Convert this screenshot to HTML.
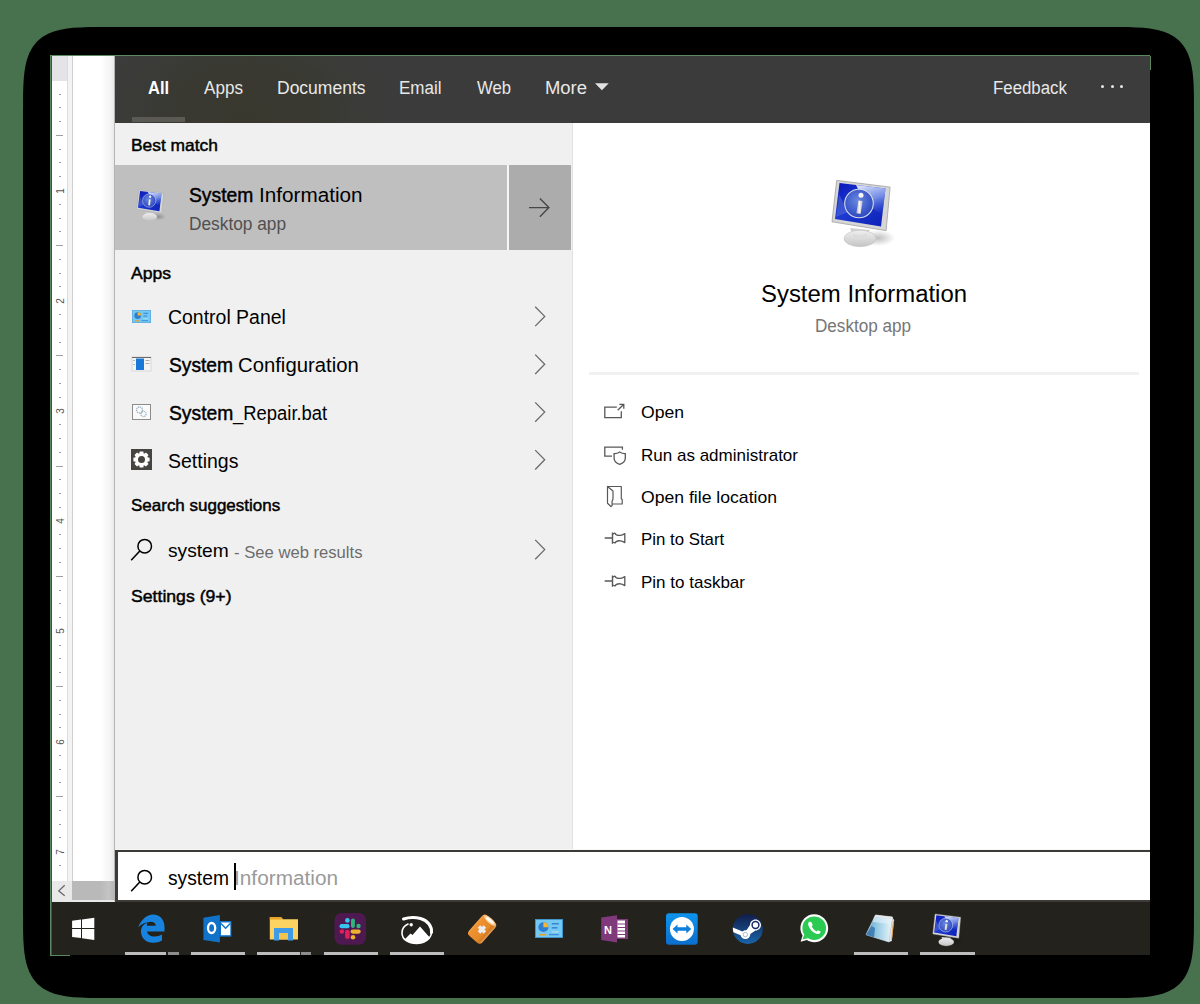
<!DOCTYPE html><html><head><meta charset="utf-8"><style>
html,body{margin:0;padding:0;}
body{width:1200px;height:1004px;position:relative;overflow:hidden;background:#48724e;font-family:"Liberation Sans", sans-serif;}
.a{position:absolute;}
.t{position:absolute;line-height:1;white-space:nowrap;transform-origin:0 0;}
svg{position:absolute;overflow:visible;}
</style></head><body>
<svg class="a" style="left:0;top:0" width="1200" height="1004" viewBox="0 0 1200 1004"><path d="M1104.00,27.00 L1127.02,27.10 L1136.52,27.39 L1143.75,27.87 L1149.79,28.55 L1155.03,29.42 L1159.68,30.49 L1163.85,31.77 L1167.64,33.25 L1171.08,34.93 L1174.22,36.84 L1177.08,38.96 L1179.68,41.32 L1182.04,43.92 L1184.16,46.78 L1186.07,49.92 L1187.75,53.36 L1189.23,57.15 L1190.51,61.32 L1191.58,65.97 L1192.45,71.21 L1193.13,77.25 L1193.61,84.48 L1193.90,93.98 L1194.00,117.00 L1194.00,908.00 L1193.90,931.02 L1193.61,940.52 L1193.13,947.75 L1192.45,953.79 L1191.58,959.03 L1190.51,963.68 L1189.23,967.85 L1187.75,971.64 L1186.07,975.08 L1184.16,978.22 L1182.04,981.08 L1179.68,983.68 L1177.08,986.04 L1174.22,988.16 L1171.08,990.07 L1167.64,991.75 L1163.85,993.23 L1159.68,994.51 L1155.03,995.58 L1149.79,996.45 L1143.75,997.13 L1136.52,997.61 L1127.02,997.90 L1104.00,998.00 L113.00,998.00 L89.98,997.90 L80.48,997.61 L73.25,997.13 L67.21,996.45 L61.97,995.58 L57.32,994.51 L53.15,993.23 L49.36,991.75 L45.92,990.07 L42.78,988.16 L39.92,986.04 L37.32,983.68 L34.96,981.08 L32.84,978.22 L30.93,975.08 L29.25,971.64 L27.77,967.85 L26.49,963.68 L25.42,959.03 L24.55,953.79 L23.87,947.75 L23.39,940.52 L23.10,931.02 L23.00,908.00 L23.00,117.00 L23.10,93.98 L23.39,84.48 L23.87,77.25 L24.55,71.21 L25.42,65.97 L26.49,61.32 L27.77,57.15 L29.25,53.36 L30.93,49.92 L32.84,46.78 L34.96,43.92 L37.32,41.32 L39.92,38.96 L42.78,36.84 L45.92,34.93 L49.36,33.25 L53.15,31.77 L57.32,30.49 L61.97,29.42 L67.21,28.55 L73.25,27.87 L80.48,27.39 L89.98,27.10 L113.00,27.00 Z" fill="#000"/></svg>
<div class="a" style="left:50px;top:55px;width:1100px;height:1px;background:#5a895f"></div>
<div class="a" style="left:50px;top:55px;width:1px;height:901px;background:#5a895f"></div>
<div class="a" style="left:1150px;top:56px;width:1px;height:14px;background:#5a895f"></div>
<div class="a" style="left:51px;top:955px;width:19px;height:1px;background:#5a895f"></div>
<div class="a" style="left:51px;top:56px;width:1px;height:899px;background:#4b4b4b"></div>
<div class="a" style="left:52px;top:56px;width:63px;height:845px;background:#fff"></div>
<div class="a" style="left:52px;top:56px;width:15px;height:25px;background:#e4e4e8"></div>
<div class="a" style="left:67px;top:56px;width:6px;height:825px;background:#f3f3f3;border-left:1px solid #dcdcdc;border-right:1px solid #d0d0d0;box-sizing:border-box"></div>
<div class="a" style="left:100px;top:56px;width:15px;height:825px;background:linear-gradient(90deg,#fff,#f4f4f4 70%,#e6e6e6)"></div>
<div class="a" style="left:59px;top:93.6px;width:2px;height:1px;background:#9a9a9a"></div>
<div class="a" style="left:59px;top:107.3px;width:2px;height:1px;background:#9a9a9a"></div>
<div class="a" style="left:59px;top:121.1px;width:2px;height:1px;background:#9a9a9a"></div>
<div class="a" style="left:56px;top:134.9px;width:7px;height:1px;background:#a0a0a0"></div>
<div class="a" style="left:59px;top:148.7px;width:2px;height:1px;background:#9a9a9a"></div>
<div class="a" style="left:59px;top:162.4px;width:2px;height:1px;background:#9a9a9a"></div>
<div class="a" style="left:59px;top:176.2px;width:2px;height:1px;background:#9a9a9a"></div>
<div class="a" style="left:59px;top:203.8px;width:2px;height:1px;background:#9a9a9a"></div>
<div class="a" style="left:59px;top:217.6px;width:2px;height:1px;background:#9a9a9a"></div>
<div class="a" style="left:59px;top:231.3px;width:2px;height:1px;background:#9a9a9a"></div>
<div class="a" style="left:56px;top:245.1px;width:7px;height:1px;background:#a0a0a0"></div>
<div class="a" style="left:59px;top:258.9px;width:2px;height:1px;background:#9a9a9a"></div>
<div class="a" style="left:59px;top:272.6px;width:2px;height:1px;background:#9a9a9a"></div>
<div class="a" style="left:59px;top:286.4px;width:2px;height:1px;background:#9a9a9a"></div>
<div class="a" style="left:59px;top:314.0px;width:2px;height:1px;background:#9a9a9a"></div>
<div class="a" style="left:59px;top:327.8px;width:2px;height:1px;background:#9a9a9a"></div>
<div class="a" style="left:59px;top:341.5px;width:2px;height:1px;background:#9a9a9a"></div>
<div class="a" style="left:56px;top:355.3px;width:7px;height:1px;background:#a0a0a0"></div>
<div class="a" style="left:59px;top:369.1px;width:2px;height:1px;background:#9a9a9a"></div>
<div class="a" style="left:59px;top:382.9px;width:2px;height:1px;background:#9a9a9a"></div>
<div class="a" style="left:59px;top:396.6px;width:2px;height:1px;background:#9a9a9a"></div>
<div class="a" style="left:59px;top:424.2px;width:2px;height:1px;background:#9a9a9a"></div>
<div class="a" style="left:59px;top:438.0px;width:2px;height:1px;background:#9a9a9a"></div>
<div class="a" style="left:59px;top:451.7px;width:2px;height:1px;background:#9a9a9a"></div>
<div class="a" style="left:56px;top:465.5px;width:7px;height:1px;background:#a0a0a0"></div>
<div class="a" style="left:59px;top:479.3px;width:2px;height:1px;background:#9a9a9a"></div>
<div class="a" style="left:59px;top:493.1px;width:2px;height:1px;background:#9a9a9a"></div>
<div class="a" style="left:59px;top:506.8px;width:2px;height:1px;background:#9a9a9a"></div>
<div class="a" style="left:59px;top:534.4px;width:2px;height:1px;background:#9a9a9a"></div>
<div class="a" style="left:59px;top:548.2px;width:2px;height:1px;background:#9a9a9a"></div>
<div class="a" style="left:59px;top:561.9px;width:2px;height:1px;background:#9a9a9a"></div>
<div class="a" style="left:56px;top:575.7px;width:7px;height:1px;background:#a0a0a0"></div>
<div class="a" style="left:59px;top:589.5px;width:2px;height:1px;background:#9a9a9a"></div>
<div class="a" style="left:59px;top:603.2px;width:2px;height:1px;background:#9a9a9a"></div>
<div class="a" style="left:59px;top:617.0px;width:2px;height:1px;background:#9a9a9a"></div>
<div class="a" style="left:59px;top:644.6px;width:2px;height:1px;background:#9a9a9a"></div>
<div class="a" style="left:59px;top:658.4px;width:2px;height:1px;background:#9a9a9a"></div>
<div class="a" style="left:59px;top:672.1px;width:2px;height:1px;background:#9a9a9a"></div>
<div class="a" style="left:56px;top:685.9px;width:7px;height:1px;background:#a0a0a0"></div>
<div class="a" style="left:59px;top:699.7px;width:2px;height:1px;background:#9a9a9a"></div>
<div class="a" style="left:59px;top:713.5px;width:2px;height:1px;background:#9a9a9a"></div>
<div class="a" style="left:59px;top:727.2px;width:2px;height:1px;background:#9a9a9a"></div>
<div class="a" style="left:59px;top:754.8px;width:2px;height:1px;background:#9a9a9a"></div>
<div class="a" style="left:59px;top:768.6px;width:2px;height:1px;background:#9a9a9a"></div>
<div class="a" style="left:59px;top:782.3px;width:2px;height:1px;background:#9a9a9a"></div>
<div class="a" style="left:56px;top:796.1px;width:7px;height:1px;background:#a0a0a0"></div>
<div class="a" style="left:59px;top:809.9px;width:2px;height:1px;background:#9a9a9a"></div>
<div class="a" style="left:59px;top:823.6px;width:2px;height:1px;background:#9a9a9a"></div>
<div class="a" style="left:59px;top:837.4px;width:2px;height:1px;background:#9a9a9a"></div>
<div class="a" style="left:59px;top:865.0px;width:2px;height:1px;background:#9a9a9a"></div>
<div class="t" style="left:55px;top:185.5px;width:12px;height:10px;font-size:10px;color:#555;text-align:center;transform:rotate(-90deg);transform-origin:50% 50%">1</div>
<div class="t" style="left:55px;top:295.7px;width:12px;height:10px;font-size:10px;color:#555;text-align:center;transform:rotate(-90deg);transform-origin:50% 50%">2</div>
<div class="t" style="left:55px;top:405.9px;width:12px;height:10px;font-size:10px;color:#555;text-align:center;transform:rotate(-90deg);transform-origin:50% 50%">3</div>
<div class="t" style="left:55px;top:516.1px;width:12px;height:10px;font-size:10px;color:#555;text-align:center;transform:rotate(-90deg);transform-origin:50% 50%">4</div>
<div class="t" style="left:55px;top:626.3px;width:12px;height:10px;font-size:10px;color:#555;text-align:center;transform:rotate(-90deg);transform-origin:50% 50%">5</div>
<div class="t" style="left:55px;top:736.5px;width:12px;height:10px;font-size:10px;color:#555;text-align:center;transform:rotate(-90deg);transform-origin:50% 50%">6</div>
<div class="t" style="left:55px;top:846.7px;width:12px;height:10px;font-size:10px;color:#555;text-align:center;transform:rotate(-90deg);transform-origin:50% 50%">7</div>
<div class="a" style="left:52px;top:881px;width:20px;height:19px;background:#e9e9e9"></div>
<div class="a" style="left:72px;top:881px;width:43px;height:19px;background:linear-gradient(90deg,#b9b9b9,#b9b9b9 65%,#c4c4c4 85%,#b4b4b4)"></div>
<div class="a" style="left:52px;top:900px;width:63px;height:2px;background:#e8e8e8"></div>
<svg style="left:58px;top:884px" width="10" height="14" viewBox="0 0 10 14"><path d="M6.7,1.3 L0.8,6.9 L6.7,11.7" fill="none" stroke="#666" stroke-width="1.3"/></svg>
<div class="a" style="left:115px;top:56px;width:1035px;height:67px;background:radial-gradient(ellipse 150px 110px at 130px 60px,#38382e 0%,rgba(56,56,46,0.7) 45%,rgba(60,60,60,0) 100%),linear-gradient(90deg,#3c3c3c,#3b3b3b 50%,#3c3c3c)"></div>
<div class="a" style="left:132px;top:117px;width:53px;height:5px;background:#5a5954"></div>
<div class="a" style="left:114px;top:56px;width:1px;height:845px;background:#b4b4b4"></div>
<div class="a" style="left:115px;top:123px;width:457px;height:726px;background:#f0f0f0"></div>
<div class="a" style="left:572px;top:123px;width:1px;height:726px;background:#e2e2e2"></div>
<div class="a" style="left:573px;top:123px;width:577px;height:726px;background:#fff"></div>
<div class="a" style="left:115px;top:165px;width:392px;height:85px;background:#bfbfbf"></div>
<div class="a" style="left:507px;top:165px;width:2px;height:85px;background:#f7f7f7"></div>
<div class="a" style="left:509px;top:165px;width:62px;height:85px;background:#acacac"></div>
<div class="a" style="left:589px;top:372px;width:550px;height:3px;background:#f1f1f1"></div>
<div class="a" style="left:115px;top:849px;width:1035px;height:1px;background:#f7f7f7"></div>
<div class="a" style="left:115px;top:850px;width:1035px;height:52px;background:#3c3b38"></div>
<div class="a" style="left:118px;top:852px;width:1032px;height:48px;background:#fff"></div>
<div class="a" style="left:52px;top:902px;width:1098px;height:53px;background:#23221c"></div>
<div class="t" style="left:148.30px;top:78.66px;font-size:18px;color:#fff;font-weight:700;transform:scaleX(0.9147);">All</div>
<div class="t" style="left:203.50px;top:78.66px;font-size:18px;color:#e8e8e8;font-weight:400;transform:scaleX(0.9505);">Apps</div>
<div class="t" style="left:276.50px;top:78.66px;font-size:18px;color:#e8e8e8;font-weight:400;transform:scaleX(0.9723);">Documents</div>
<div class="t" style="left:398.50px;top:78.66px;font-size:18px;color:#e8e8e8;font-weight:400;transform:scaleX(0.9463);">Email</div>
<div class="t" style="left:477.00px;top:78.66px;font-size:18px;color:#e8e8e8;font-weight:400;transform:scaleX(0.9267);">Web</div>
<div class="t" style="left:545.00px;top:78.66px;font-size:18px;color:#e8e8e8;font-weight:400;transform:scaleX(1.0246);">More</div>
<div class="t" style="left:993.00px;top:78.66px;font-size:18px;color:#e8e8e8;font-weight:400;transform:scaleX(0.9350);">Feedback</div>
<div class="t" style="left:131.00px;top:136.78px;font-size:16.5px;color:#000;font-weight:400;transform:scaleX(1.0533);-webkit-text-stroke:0.45px currentColor;">Best match</div>
<div class="t" style="left:189.00px;top:185.07px;font-size:20px;color:#000;font-weight:400;transform:scaleX(0.9638);-webkit-text-stroke:0.45px currentColor;">System</div>
<div class="t" style="left:258.90px;top:185.07px;font-size:20px;color:#000;font-weight:400;transform:scaleX(1.0349);">Information</div>
<div class="t" style="left:189.00px;top:215.99px;font-size:17.5px;color:#505050;font-weight:400;transform:scaleX(0.9883);">Desktop app</div>
<div class="t" style="left:131.00px;top:264.78px;font-size:16.5px;color:#000;font-weight:400;transform:scaleX(1.0647);-webkit-text-stroke:0.45px currentColor;">Apps</div>
<div class="t" style="left:167.75px;top:307.27px;font-size:20px;color:#000;font-weight:400;transform:scaleX(0.9728);">Control Panel</div>
<div class="t" style="left:168.75px;top:355.27px;font-size:20px;color:#000;font-weight:400;transform:scaleX(0.9597);-webkit-text-stroke:0.45px currentColor;">System</div>
<div class="t" style="left:237.70px;top:355.27px;font-size:20px;color:#000;font-weight:400;transform:scaleX(1.0148);">Configuration</div>
<div class="t" style="left:168.75px;top:403.07px;font-size:20px;color:#000;font-weight:400;transform:scaleX(0.9638);-webkit-text-stroke:0.45px currentColor;">System</div>
<div class="t" style="left:233.35px;top:403.07px;font-size:20px;color:#000;font-weight:400;transform:scaleX(0.9211);">_Repair.bat</div>
<div class="t" style="left:167.75px;top:450.57px;font-size:20px;color:#000;font-weight:400;transform:scaleX(0.9745);">Settings</div>
<div class="t" style="left:131.00px;top:497.28px;font-size:16.5px;color:#000;font-weight:400;transform:scaleX(1.0294);-webkit-text-stroke:0.45px currentColor;">Search suggestions</div>
<div class="t" style="left:167.75px;top:541.42px;font-size:19px;color:#000;font-weight:400;transform:scaleX(1.0100);">system</div>
<div class="t" style="left:234.00px;top:543.53px;font-size:16.5px;color:#6d6d6d;font-weight:400;transform:scaleX(1.0081);">- See web results</div>
<div class="t" style="left:131.00px;top:587.78px;font-size:16.5px;color:#000;font-weight:400;transform:scaleX(1.0693);-webkit-text-stroke:0.45px currentColor;">Settings (9+)</div>
<div class="t" style="left:760.80px;top:283.11px;font-size:23.5px;color:#000;font-weight:400;transform:scaleX(1.0177);">System Information</div>
<div class="t" style="left:815.30px;top:317.69px;font-size:17.5px;color:#767676;font-weight:400;transform:scaleX(0.9773);">Desktop app</div>
<div class="t" style="left:641.00px;top:404.21px;font-size:17px;color:#000;font-weight:400;transform:scaleX(1.0356);">Open</div>
<div class="t" style="left:641.00px;top:446.51px;font-size:17px;color:#000;font-weight:400;transform:scaleX(1.0010);">Run as administrator</div>
<div class="t" style="left:641.00px;top:489.01px;font-size:17px;color:#000;font-weight:400;transform:scaleX(1.0354);">Open file location</div>
<div class="t" style="left:641.00px;top:531.31px;font-size:17px;color:#000;font-weight:400;transform:scaleX(0.9893);">Pin to Start</div>
<div class="t" style="left:641.00px;top:573.81px;font-size:17px;color:#000;font-weight:400;transform:scaleX(1.0005);">Pin to taskbar</div>
<div class="t" style="left:168.30px;top:868.07px;font-size:20px;color:#000;font-weight:400;transform:scaleX(0.9618);">system</div>
<div class="t" style="left:234.00px;top:868.07px;font-size:20px;color:#9a9a9a;font-weight:400;transform:scaleX(1.0403);">Information</div>
<div class="a" id="cursor" style="left:234px;top:863px;width:2px;height:27px;background:#000"></div>
<svg style="left:590px;top:78px" width="25" height="20" viewBox="0 0 25 20"><path d="M5,5.3 L18.75,5.3 L11.9,12.2 Z" fill="#e2e2e2"/></svg>
<div class="a" style="left:1101.1px;top:85.2px;width:3.2px;height:3.2px;border-radius:50%;background:#e8e8e8"></div>
<div class="a" style="left:1110.6px;top:85.2px;width:3.2px;height:3.2px;border-radius:50%;background:#e8e8e8"></div>
<div class="a" style="left:1120.1px;top:85.2px;width:3.2px;height:3.2px;border-radius:50%;background:#e8e8e8"></div>
<svg style="left:520px;top:190px" width="40" height="35" viewBox="0 0 40 35"><path d="M9,17.6 L28.9,17.6 M19.9,8.4 L28.9,17.6 L19.9,26.8" fill="none" stroke="#474747" stroke-width="1.4"/></svg>
<svg style="left:525px;top:300px" width="30" height="32" viewBox="0 0 30 32"><path d="M10.2,6.70 L19.7,16.40 L10.2,26.10" fill="none" stroke="#6b6b6b" stroke-width="1.3"/></svg>
<svg style="left:525px;top:348px" width="30" height="32" viewBox="0 0 30 32"><path d="M10.2,6.60 L19.7,16.30 L10.2,26.00" fill="none" stroke="#6b6b6b" stroke-width="1.3"/></svg>
<svg style="left:525px;top:396px" width="30" height="32" viewBox="0 0 30 32"><path d="M10.2,6.40 L19.7,16.10 L10.2,25.80" fill="none" stroke="#6b6b6b" stroke-width="1.3"/></svg>
<svg style="left:525px;top:443px" width="30" height="32" viewBox="0 0 30 32"><path d="M10.2,7.10 L19.7,16.80 L10.2,26.50" fill="none" stroke="#6b6b6b" stroke-width="1.3"/></svg>
<svg style="left:525px;top:533px" width="30" height="32" viewBox="0 0 30 32"><path d="M10.2,6.90 L19.7,16.60 L10.2,26.30" fill="none" stroke="#6b6b6b" stroke-width="1.3"/></svg>
<svg style="left:125px;top:535px" width="35" height="30" viewBox="0 0 35 30"><circle cx="19.7" cy="11.2" r="6.8" fill="none" stroke="#000" stroke-width="1.5"/><path d="M6.6,24.7 L14.6,16.3" stroke="#000" stroke-width="1.6" stroke-linecap="round"/></svg>
<svg style="left:125px;top:865.5px" width="35" height="30" viewBox="0 0 35 30"><circle cx="19.7" cy="11.2" r="6.8" fill="none" stroke="#000" stroke-width="1.5"/><path d="M6.6,24.7 L14.6,16.3" stroke="#000" stroke-width="1.6" stroke-linecap="round"/></svg>
<svg style="left:598px;top:398px" width="34" height="34" viewBox="0 0 34 34"><path d="M18.8,9.2 L6.8,9.2 L6.8,19.7 L23.3,19.7 L23.3,13.3 M19.7,12.2 L25.8,6.3 M21.3,6.3 L25.8,6.3 L25.8,10.8" fill="none" stroke="#585858" stroke-width="1.3"/></svg>
<svg style="left:598px;top:440px" width="34" height="30" viewBox="0 0 34 30"><path d="M14,16.2 L6.8,16.2 L6.8,7.1 L24.4,7.1 L24.4,9.7" fill="none" stroke="#585858" stroke-width="1.3"/><path d="M21.7,12 C19.8,13.3 18,13.7 16.1,13.6 L16.1,18.3 C16.1,21.2 18.3,23.3 21.7,24.4 C25.1,23.3 27.3,21.2 27.3,18.3 L27.3,13.6 C25.4,13.7 23.6,13.3 21.7,12 Z" fill="none" stroke="#585858" stroke-width="1.3"/></svg>
<svg style="left:598px;top:482px" width="34" height="30" viewBox="0 0 34 30"><path d="M9.5,4.5 L23.3,4.5 L23.3,16.8 L24.2,17.5 L24.2,22 L14,22 M9.5,4.5 L9.5,21.2 L13,24.5 L14.2,23.3 L14,19.5 L15,17 L15,9 Z" fill="none" stroke="#585858" stroke-width="1.2" stroke-linejoin="round"/></svg>
<svg style="left:598px;top:528.3px" width="34" height="20" viewBox="0 0 34 20"><path d="M6.7,10 L14.5,10 M14.5,4.5 L14.5,15.7" fill="none" stroke="#585858" stroke-width="1.4"/><path d="M14.5,6.2 L17,5.2 C18,7.4 20.5,7.6 22.5,7.4 C24,7.2 25.5,6.4 26.8,5.6 L26.8,14.6 C25.5,13.8 24,13 22.5,12.8 C20.5,12.6 18,12.8 17,15 L14.5,14" fill="none" stroke="#585858" stroke-width="1.3" stroke-linejoin="round"/></svg>
<svg style="left:598px;top:570.7px" width="34" height="20" viewBox="0 0 34 20"><path d="M6.7,10 L14.5,10 M14.5,4.5 L14.5,15.7" fill="none" stroke="#585858" stroke-width="1.4"/><path d="M14.5,6.2 L17,5.2 C18,7.4 20.5,7.6 22.5,7.4 C24,7.2 25.5,6.4 26.8,5.6 L26.8,14.6 C25.5,13.8 24,13 22.5,12.8 C20.5,12.6 18,12.8 17,15 L14.5,14" fill="none" stroke="#585858" stroke-width="1.3" stroke-linejoin="round"/></svg>
<svg style="left:820.00px;top:170.00px" width="80.00" height="80.00" viewBox="0 0 80 80"><defs>
<linearGradient id="sascr" x1="0" y1="0" x2="1" y2="1"><stop offset="0" stop-color="#0a16b8"/><stop offset="0.45" stop-color="#1d3ad0"/><stop offset="1" stop-color="#0c1fb5"/></linearGradient>
<linearGradient id="sahl" x1="0.3" y1="0" x2="0.6" y2="1"><stop offset="0" stop-color="#dfe8ff" stop-opacity="0.95"/><stop offset="0.5" stop-color="#9db4f0" stop-opacity="0.7"/><stop offset="1" stop-color="#5b7de0" stop-opacity="0.1"/></linearGradient>
<linearGradient id="sastem" x1="0" y1="0" x2="1" y2="0"><stop offset="0" stop-color="#b8b8b8"/><stop offset="0.5" stop-color="#f4f4f4"/><stop offset="1" stop-color="#c0c0c0"/></linearGradient>
<radialGradient id="sacirc" cx="0.45" cy="0.4" r="0.6"><stop offset="0" stop-color="#6a88e0"/><stop offset="1" stop-color="#2c48c0"/></radialGradient>
<linearGradient id="sabase" x1="0" y1="0" x2="0" y2="1"><stop offset="0" stop-color="#f0f0f0"/><stop offset="1" stop-color="#c4c4c4"/></linearGradient>
<radialGradient id="sashd" cx="0.5" cy="0.5" r="0.5"><stop offset="0" stop-color="#000" stop-opacity="0.25"/><stop offset="1" stop-color="#000" stop-opacity="0"/></radialGradient>
</defs><ellipse cx="58" cy="68" rx="17" ry="8" fill="url(#sashd)"/>
<path d="M30,58 L50,60 C48,63 47,65 46.5,68 C42,70 36,70 32.5,68 C32,64 31.5,61 30,58 Z" fill="#cfcfcf"/>
<ellipse cx="40" cy="68.5" rx="16" ry="8.2" fill="url(#sabase)" stroke="#bdbdbd" stroke-width="0.5"/>
<path d="M33,63 C36,66 44,66 47,63 L46.5,68 C42,70 36,70 33.5,68 Z" fill="#dcdcdc"/>
<path d="M16.7,10.4 L70.1,17.1 L66.1,60.6 L12,51.8 Z" fill="#d6d6d6" stroke="#a0a0a0" stroke-width="0.8"/>
<path d="M19.5,13 L65.5,18.5 L61,56.5 L15,49 Z" fill="url(#sascr)"/>
<path d="M36,15 L65.5,18.5 L62.5,44 C56,42 46,36 36,15 Z" fill="url(#sahl)"/>
<path d="M19,24 L28,42 L16,47 Z" fill="#6a82dc" opacity="0.4"/>
<circle cx="39" cy="33.5" r="14.3" fill="url(#sacirc)" stroke="#d8dde8" stroke-width="1.1"/>
<circle cx="41" cy="25.3" r="2.5" fill="#f6f6f6"/>
<path d="M38.4,30.5 L42.6,31 L40.6,43.8 L36.4,43.2 Z" fill="url(#sastem)"/></svg>
<svg style="left:131.42px;top:184.75px" width="37.28" height="37.28" viewBox="0 0 80 80"><defs>
<linearGradient id="sbscr" x1="0" y1="0" x2="1" y2="1"><stop offset="0" stop-color="#0a16b8"/><stop offset="0.45" stop-color="#1d3ad0"/><stop offset="1" stop-color="#0c1fb5"/></linearGradient>
<linearGradient id="sbhl" x1="0.3" y1="0" x2="0.6" y2="1"><stop offset="0" stop-color="#dfe8ff" stop-opacity="0.95"/><stop offset="0.5" stop-color="#9db4f0" stop-opacity="0.7"/><stop offset="1" stop-color="#5b7de0" stop-opacity="0.1"/></linearGradient>
<linearGradient id="sbstem" x1="0" y1="0" x2="1" y2="0"><stop offset="0" stop-color="#b8b8b8"/><stop offset="0.5" stop-color="#f4f4f4"/><stop offset="1" stop-color="#c0c0c0"/></linearGradient>
<radialGradient id="sbcirc" cx="0.45" cy="0.4" r="0.6"><stop offset="0" stop-color="#6a88e0"/><stop offset="1" stop-color="#2c48c0"/></radialGradient>
<linearGradient id="sbbase" x1="0" y1="0" x2="0" y2="1"><stop offset="0" stop-color="#f0f0f0"/><stop offset="1" stop-color="#c4c4c4"/></linearGradient>
<radialGradient id="sbshd" cx="0.5" cy="0.5" r="0.5"><stop offset="0" stop-color="#000" stop-opacity="0.25"/><stop offset="1" stop-color="#000" stop-opacity="0"/></radialGradient>
</defs><ellipse cx="58" cy="68" rx="17" ry="8" fill="url(#sbshd)"/>
<path d="M30,58 L50,60 C48,63 47,65 46.5,68 C42,70 36,70 32.5,68 C32,64 31.5,61 30,58 Z" fill="#cfcfcf"/>
<ellipse cx="40" cy="68.5" rx="16" ry="8.2" fill="url(#sbbase)" stroke="#bdbdbd" stroke-width="0.5"/>
<path d="M33,63 C36,66 44,66 47,63 L46.5,68 C42,70 36,70 33.5,68 Z" fill="#dcdcdc"/>
<path d="M16.7,10.4 L70.1,17.1 L66.1,60.6 L12,51.8 Z" fill="#d6d6d6" stroke="#a0a0a0" stroke-width="0.8"/>
<path d="M19.5,13 L65.5,18.5 L61,56.5 L15,49 Z" fill="url(#sbscr)"/>
<path d="M36,15 L65.5,18.5 L62.5,44 C56,42 46,36 36,15 Z" fill="url(#sbhl)"/>
<path d="M19,24 L28,42 L16,47 Z" fill="#6a82dc" opacity="0.4"/>
<circle cx="39" cy="33.5" r="14.3" fill="url(#sbcirc)" stroke="#d8dde8" stroke-width="1.1"/>
<circle cx="41" cy="25.3" r="2.5" fill="#f6f6f6"/>
<path d="M38.4,30.5 L42.6,31 L40.6,43.8 L36.4,43.2 Z" fill="url(#sbstem)"/></svg>
<svg style="left:926.87px;top:908.70px" width="38.48" height="38.48" viewBox="0 0 80 80"><defs>
<linearGradient id="scscr" x1="0" y1="0" x2="1" y2="1"><stop offset="0" stop-color="#0a16b8"/><stop offset="0.45" stop-color="#1d3ad0"/><stop offset="1" stop-color="#0c1fb5"/></linearGradient>
<linearGradient id="schl" x1="0.3" y1="0" x2="0.6" y2="1"><stop offset="0" stop-color="#dfe8ff" stop-opacity="0.95"/><stop offset="0.5" stop-color="#9db4f0" stop-opacity="0.7"/><stop offset="1" stop-color="#5b7de0" stop-opacity="0.1"/></linearGradient>
<linearGradient id="scstem" x1="0" y1="0" x2="1" y2="0"><stop offset="0" stop-color="#b8b8b8"/><stop offset="0.5" stop-color="#f4f4f4"/><stop offset="1" stop-color="#c0c0c0"/></linearGradient>
<radialGradient id="sccirc" cx="0.45" cy="0.4" r="0.6"><stop offset="0" stop-color="#6a88e0"/><stop offset="1" stop-color="#2c48c0"/></radialGradient>
<linearGradient id="scbase" x1="0" y1="0" x2="0" y2="1"><stop offset="0" stop-color="#f0f0f0"/><stop offset="1" stop-color="#c4c4c4"/></linearGradient>
<radialGradient id="scshd" cx="0.5" cy="0.5" r="0.5"><stop offset="0" stop-color="#000" stop-opacity="0.25"/><stop offset="1" stop-color="#000" stop-opacity="0"/></radialGradient>
</defs><ellipse cx="58" cy="68" rx="17" ry="8" fill="url(#scshd)"/>
<path d="M30,58 L50,60 C48,63 47,65 46.5,68 C42,70 36,70 32.5,68 C32,64 31.5,61 30,58 Z" fill="#cfcfcf"/>
<ellipse cx="40" cy="68.5" rx="16" ry="8.2" fill="url(#scbase)" stroke="#bdbdbd" stroke-width="0.5"/>
<path d="M33,63 C36,66 44,66 47,63 L46.5,68 C42,70 36,70 33.5,68 Z" fill="#dcdcdc"/>
<path d="M16.7,10.4 L70.1,17.1 L66.1,60.6 L12,51.8 Z" fill="#d6d6d6" stroke="#a0a0a0" stroke-width="0.8"/>
<path d="M19.5,13 L65.5,18.5 L61,56.5 L15,49 Z" fill="url(#scscr)"/>
<path d="M36,15 L65.5,18.5 L62.5,44 C56,42 46,36 36,15 Z" fill="url(#schl)"/>
<path d="M19,24 L28,42 L16,47 Z" fill="#6a82dc" opacity="0.4"/>
<circle cx="39" cy="33.5" r="14.3" fill="url(#sccirc)" stroke="#d8dde8" stroke-width="1.1"/>
<circle cx="41" cy="25.3" r="2.5" fill="#f6f6f6"/>
<path d="M38.4,30.5 L42.6,31 L40.6,43.8 L36.4,43.2 Z" fill="url(#scstem)"/></svg>
<svg style="left:132px;top:310px" width="19" height="13" viewBox="0 0 20 14" preserveAspectRatio="none"><rect x="0.3" y="0.3" width="19.4" height="13.4" fill="#74c8f2" stroke="#3d9ad8" stroke-width="0.6"/><circle cx="6" cy="6" r="3.6" fill="#2f7fd0"/><path d="M6,2.4 A3.6,3.6 0 0 1 9.6,6 L6,6 Z" fill="#f7b530"/><rect x="12" y="3" width="5" height="1" fill="#2f7fd0"/><rect x="12" y="6" width="4" height="1" fill="#2f7fd0"/><rect x="12" y="9" width="5" height="1" fill="#a8dcf8"/><rect x="3" y="11" width="5" height="1.2" fill="#f2a020"/><rect x="10" y="11" width="7" height="1" fill="#3d8ed8"/></svg>
<svg style="left:535px;top:919px" width="28" height="19" viewBox="0 0 20 14" preserveAspectRatio="none"><rect x="0.3" y="0.3" width="19.4" height="13.4" fill="#74c8f2" stroke="#3d9ad8" stroke-width="0.6"/><circle cx="6" cy="6" r="3.6" fill="#2f7fd0"/><path d="M6,2.4 A3.6,3.6 0 0 1 9.6,6 L6,6 Z" fill="#f7b530"/><rect x="12" y="3" width="5" height="1" fill="#2f7fd0"/><rect x="12" y="6" width="4" height="1" fill="#2f7fd0"/><rect x="12" y="9" width="5" height="1" fill="#a8dcf8"/><rect x="3" y="11" width="5" height="1.2" fill="#f2a020"/><rect x="10" y="11" width="7" height="1" fill="#3d8ed8"/></svg>
<svg style="left:132px;top:357px" width="19" height="14" viewBox="0 0 19 14"><rect x="0" y="0" width="19" height="14" fill="#f4f4f4" stroke="#c8c8c8" stroke-width="0.6"/><rect x="0" y="0" width="19" height="1" fill="#6a6a6a"/><rect x="4" y="1.5" width="8" height="11.5" fill="#1778d8"/><rect x="13.5" y="3" width="4" height="0.8" fill="#9a9a9a"/><rect x="13.5" y="6" width="4" height="0.8" fill="#9a9a9a"/><rect x="1" y="3" width="2" height="0.8" fill="#aaa"/><rect x="1" y="7" width="2" height="0.8" fill="#aaa"/></svg>
<svg style="left:132px;top:404px" width="19" height="16" viewBox="0 0 19 16"><rect x="0.5" y="0.5" width="18" height="15" fill="#fafafa" stroke="#8c8c8c" stroke-width="1"/><circle cx="7.5" cy="6" r="3" fill="none" stroke="#9bb0c0" stroke-width="1.4" stroke-dasharray="1.2 0.8"/><circle cx="11.5" cy="10" r="2.6" fill="none" stroke="#9bb8c8" stroke-width="1.4" stroke-dasharray="1.2 0.8"/></svg>
<svg style="left:131px;top:449px" width="21" height="21" viewBox="0 0 21 21"><rect width="21" height="21" fill="#474540"/><path d="M16.40,8.28 L18.60,8.69 L18.60,12.31 L16.40,12.72 L16.32,12.91 L16.24,13.10 L17.51,14.95 L14.95,17.51 L13.10,16.24 L12.91,16.32 L12.72,16.40 L12.31,18.60 L8.69,18.60 L8.28,16.40 L8.09,16.32 L7.90,16.24 L6.05,17.51 L3.49,14.95 L4.76,13.10 L4.68,12.91 L4.60,12.72 L2.40,12.31 L2.40,8.69 L4.60,8.28 L4.68,8.09 L4.76,7.90 L3.49,6.05 L6.05,3.49 L7.90,4.76 L8.09,4.68 L8.28,4.60 L8.69,2.40 L12.31,2.40 L12.72,4.60 L12.91,4.68 L13.10,4.76 L14.95,3.49 L17.51,6.05 L16.24,7.90 L16.32,8.09 Z" fill="#fff"/><circle cx="10.5" cy="10.5" r="3.5" fill="#474540"/></svg>
<div class="a" style="left:124.5px;top:952px;width:41.5px;height:3px;background:#bdbdbd"></div>
<div class="a" style="left:167.5px;top:952px;width:11.0px;height:3px;background:#8d8d8d"></div>
<div class="a" style="left:191px;top:952px;width:54px;height:3px;background:#bdbdbd"></div>
<div class="a" style="left:257px;top:952px;width:42.5px;height:3px;background:#bdbdbd"></div>
<div class="a" style="left:300.5px;top:952px;width:10.5px;height:3px;background:#8d8d8d"></div>
<div class="a" style="left:323.5px;top:952px;width:54.0px;height:3px;background:#bdbdbd"></div>
<div class="a" style="left:390px;top:952px;width:54px;height:3px;background:#bdbdbd"></div>
<div class="a" style="left:854px;top:952px;width:54px;height:3px;background:#bdbdbd"></div>
<div class="a" style="left:920px;top:952px;width:54.5px;height:3px;background:#bdbdbd"></div>
<svg style="left:70px;top:915px" width="26" height="28" viewBox="0 0 26 28"><path d="M2.1,5.8 L11,4.6 L11,13 L2.1,13 Z M12,4.4 L24.3,2.8 L24.3,13 L12,13 Z M2.1,14 L11,14 L11,23.1 L2.1,22.1 Z M12,14 L24.3,14 L24.3,24.9 L12,23.3 Z" fill="#fff"/></svg>
<svg style="left:134px;top:910px" width="36" height="36" viewBox="0 0 36 36"><path d="M4.3,17.2 C7,10 13,4.6 19,4.6 C26,4.6 30.5,10 30.5,17 L30.5,21.5 L13,21.5 C13.8,25 17,26.6 20.5,26.6 C23.5,26.6 26,25.8 28,24.6 L28,30.6 C25.5,32 22.5,32.8 19,32.8 C12,32.8 7,28 7,21.5 C7,17 9.5,13.8 14,12.2 L12.9,13.5 L12.9,15.8 L21.9,15.8 C21.5,13 19.5,11.8 16.8,11.8 C12,11.8 7.5,14 4.3,17.2 Z" fill="#1883de"/></svg>
<svg style="left:200px;top:912px" width="34" height="33" viewBox="0 0 34 33"><path d="M3.4,5.8 L19.9,2.9 L19.9,30.6 L3.4,27.9 Z" fill="#1072c8"/><ellipse cx="11.6" cy="16" rx="3.6" ry="5" fill="none" stroke="#fff" stroke-width="2.3"/><rect x="19.9" y="9" width="11.5" height="15.7" fill="#1072c8"/><rect x="21" y="10.5" width="9.3" height="12.7" fill="#fff"/><path d="M21,11.5 L25.6,16.2 L30.3,11.5" fill="none" stroke="#1072c8" stroke-width="1.4"/></svg>
<svg style="left:268px;top:915px" width="32" height="28" viewBox="0 0 32 28"><path d="M1.8,2 L13,2 L15,4.2 L30,4.2 L30,24.5 L1.8,24.5 Z" fill="#fcd361"/><path d="M1.8,2 L13,2 L15,4.5 L1.8,4.5 Z" fill="#e8a42a"/><path d="M6,25.5 L6,13 L25,13 L25,25.5 L20,25.5 L20,18 L11,18 L11,25.5 Z" fill="#3f9be6"/><rect x="11" y="18" width="9" height="6.5" fill="#f0c450"/></svg>
<svg style="left:333px;top:912px" width="34" height="34" viewBox="0 0 34 34"><rect x="1.5" y="0.9" width="31.5" height="31.9" rx="7" fill="#4e1850"/><rect x="6.5" y="12" width="10.1" height="4.3" rx="2.15" fill="#36c5f0"/><circle cx="14.4" cy="8.4" r="2.3" fill="#36c5f0"/><rect x="18" y="6.4" width="3.9" height="9.5" rx="1.95" fill="#2eb67d"/><circle cx="25.5" cy="14" r="2.2" fill="#2eb67d"/><rect x="17.6" y="17.5" width="10.1" height="4.2" rx="2.1" fill="#ecb22e"/><circle cx="20" cy="25.2" r="2.3" fill="#ecb22e"/><rect x="12.1" y="17.7" width="4.6" height="9.3" rx="2.3" fill="#e01e5a"/><circle cx="8.9" cy="19.5" r="2.3" fill="#e01e5a"/></svg>
<svg style="left:398px;top:911px" width="38" height="36" viewBox="0 0 38 36"><path d="M5.5,8 C10,6.5 17,6 22.5,7.5 C30,9.5 34,15.5 33.5,21.5" fill="none" stroke="#fff" stroke-width="3" stroke-linecap="round"/><path d="M33.5,21.5 C33,28 26,32.5 18.5,32.5 C10.5,32.5 4,28.5 4,22 C4,18 6.5,14.5 10,13" fill="none" stroke="#fff" stroke-width="1.6" stroke-linecap="round"/><path d="M6.5,28.5 L12.5,22.5 L14.5,24 L22,15.5 L32.2,27 C29,31 24,32.5 18.5,32.5 C13,32.5 9,31 6.5,28.5 Z" fill="#fff"/><circle cx="13.2" cy="13.8" r="1.7" fill="#fff"/></svg>
<svg style="left:465px;top:910px" width="36" height="37" viewBox="0 0 36 37"><defs><linearGradient id="cap" x1="0" y1="0" x2="1" y2="0"><stop offset="0" stop-color="#f2a246"/><stop offset="0.15" stop-color="#ee9030"/><stop offset="0.7" stop-color="#e58a28"/><stop offset="0.85" stop-color="#d27a20"/><stop offset="1" stop-color="#e8a05a"/></linearGradient></defs><g transform="rotate(41.4 17.15 19.15)"><rect x="8.25" y="5.65" width="17.8" height="27" rx="4" fill="url(#cap)"/><ellipse cx="17.15" cy="7.6" rx="7.6" ry="2.6" fill="#f6c890"/><ellipse cx="17.15" cy="7.6" rx="5" ry="1.5" fill="#fff" opacity="0.9"/></g><g transform="rotate(45 16.9 19.5)"><rect x="15.1" y="15.3" width="3.6" height="8.4" fill="#ececec"/><rect x="12.7" y="17.7" width="8.4" height="3.6" fill="#ececec"/></g></svg>
<svg style="left:598px;top:913px" width="34" height="32" viewBox="0 0 34 32"><path d="M3.2,4.5 L19,2.2 L19,29.5 L3.2,27 Z" fill="#80397b"/><text x="6" y="21" font-family="Liberation Sans" font-weight="700" font-size="11" fill="#fff">N</text><rect x="19" y="6" width="11" height="20" fill="#80397b"/><rect x="19.5" y="7.5" width="7.5" height="17" fill="#fff"/><path d="M19.5,11 L27,11 M19.5,14.5 L27,14.5 M19.5,18 L27,18 M19.5,21.5 L27,21.5" stroke="#80397b" stroke-width="1"/></svg>
<svg style="left:664px;top:911px" width="36" height="36" viewBox="0 0 36 36"><defs><linearGradient id="tv" x1="0" y1="0" x2="0" y2="1"><stop offset="0" stop-color="#0e94ee"/><stop offset="1" stop-color="#0c6fcc"/></linearGradient></defs><rect x="2" y="2.2" width="31.7" height="31.5" rx="3" fill="url(#tv)"/><circle cx="17.9" cy="18" r="12" fill="#fff"/><path d="M8.6,18 L13.5,13.6 L13.5,16.3 L22.3,16.3 L22.3,13.6 L27.2,18 L22.3,22.4 L22.3,19.7 L13.5,19.7 L13.5,22.4 Z" fill="#0e80dc"/></svg>
<svg style="left:730px;top:911px" width="36" height="36" viewBox="0 0 36 36"><defs><linearGradient id="stm" x1="0" y1="0" x2="0" y2="1"><stop offset="0" stop-color="#111d4a"/><stop offset="1" stop-color="#1a64a8"/></linearGradient></defs><circle cx="17.8" cy="18" r="15" fill="url(#stm)"/><path d="M2.8,16.5 L12.5,20.5 C13.5,19.5 15,19 16.5,19.2 L20,14 C20,10.8 22.5,8.5 25.5,8.5 C28.5,8.5 31,11 31,14 C31,17 28.5,19.5 25.5,19.5 L20.3,23 C20.3,26 18,28 15.3,28 C13,28 11,26.3 10.6,24.2 L3.4,21.3 C3,19.8 2.8,18.2 2.8,16.5 Z" fill="#fff"/><circle cx="25.5" cy="14" r="3.4" fill="none" stroke="#1b2a66" stroke-width="1.5"/><circle cx="15.3" cy="23.6" r="2.2" fill="none" stroke="#9aa8c8" stroke-width="0.8"/></svg>
<svg style="left:797px;top:911px" width="36" height="36" viewBox="0 0 36 36"><path d="M3.6,30.8 L5.6,24.5 C4.4,22.5 3.4,20 3.4,17.2 C3.4,9.5 9.6,3.2 17.2,3.2 C24.9,3.2 31.2,9.5 31.2,17.2 C31.2,24.9 24.9,31.2 17.2,31.2 C14.5,31.2 12,30.4 9.9,29 Z" fill="#fff"/><circle cx="17.2" cy="17.2" r="11.8" fill="#2bca53"/><path d="M5.4,28.5 L7.4,23.6 L11,27.3 Z" fill="#2bca53"/><path d="M12.5,10.5 C11.6,11.2 11,12.3 11.2,13.6 C11.8,17.5 15.8,21.8 19.8,22.9 C21.3,23.3 22.6,22.8 23.3,21.7 L23.6,20.6 L20.8,19.2 L19.7,20.4 C17.5,19.6 15.5,17.5 14.7,15.3 L15.8,14.2 L14.5,11.2 Z" fill="#fff"/></svg>
<svg style="left:862px;top:912px" width="36" height="33" viewBox="0 0 36 33"><defs><linearGradient id="np" x1="0" y1="0" x2="1" y2="0"><stop offset="0" stop-color="#5f9fcf"/><stop offset="0.35" stop-color="#8cc4e0"/><stop offset="0.7" stop-color="#bfe0ef"/><stop offset="1" stop-color="#f0f6fa"/></linearGradient></defs><path d="M13.5,3 L30.5,5 L27,30 L4,22.7 Z" fill="url(#np)" stroke="#d0dde6" stroke-width="0.7"/><path d="M13.5,3 L30.5,5 L30.2,7 L12.5,5 Z" fill="#e8e8e8"/><path d="M30.5,6 L27,30 L29.8,29 L32.2,8 Z" fill="#e6e6e6"/><path d="M31,9 L29.3,28 L30,28 L31.8,9 Z" fill="#e08a2a"/><path d="M4,22.7 L9.5,14 L13,16 L12,25.5 Z" fill="#2f6fa8" opacity="0.75"/><path d="M12,5 L28,7 L27.5,12 L11,10 Z" fill="#e6f2f8" opacity="0.6"/></svg>
</body></html>
